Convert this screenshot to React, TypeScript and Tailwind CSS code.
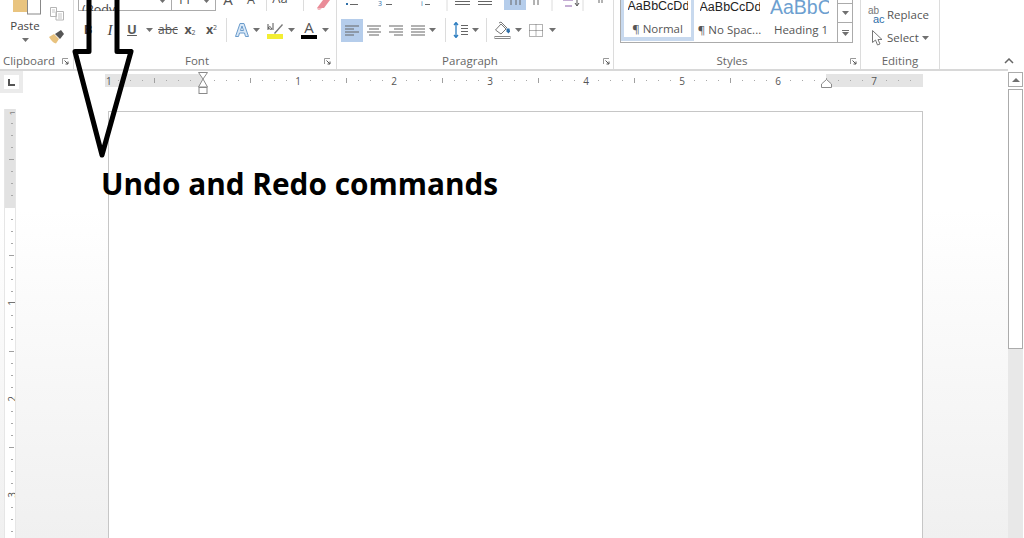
import React from 'react';

const FONT = "font-['Open_Sans','Noto_Sans',sans-serif]";

function Caret({ className = '' }: { className?: string }) {
  return (
    <svg width="7" height="4" viewBox="0 0 7 4" className={className}>
      <path d="M0 0h7L3.5 4z" fill="#707070" />
    </svg>
  );
}

function Launcher() {
  return (
    <svg width="7" height="7" viewBox="0 0 7 7" className="shrink-0">
      <path d="M0.5 6V0.5H6" fill="none" stroke="#999" />
      <path d="M2.5 2.5L6 6M6 3.5V6H3.5" fill="none" stroke="#555" />
    </svg>
  );
}

function Sep({ className = 'h-[24px]' }: { className?: string }) {
  return <div className={`w-px shrink-0 bg-[#dcdcdc] ${className}`} />;
}

function GroupLabel({ label, launcher = true, launcherGap = 'mr-[3px]', labelClass = '' }: { label: string; launcher?: boolean; launcherGap?: string; labelClass?: string }) {
  return (
    <div className="h-[16px] flex items-center">
      <span className={`flex-1 text-center text-[11.5px] leading-[16px] text-[#666] ${labelClass}`}>{label}</span>
      {launcher && <span className={`flex ${launcherGap}`}><Launcher /></span>}
    </div>
  );
}

function Lines({ kind }: { kind: 'left' | 'center' | 'right' | 'justify' }) {
  const rows: Record<string, number[][]> = {
    left: [[1, 15], [1, 10], [1, 15], [1, 10]],
    center: [[1, 15], [3, 13], [1, 15], [3, 13]],
    right: [[1, 15], [6, 15], [1, 15], [6, 15]],
    justify: [[1, 15], [1, 15], [1, 15], [1, 15]],
  };
  return (
    <svg width="16" height="11" viewBox="0 0 16 11">
      {rows[kind].map(([a, b], i) => (
        <rect key={i} x={a} y={i * 3 + 0.5} width={b - a} height="1" fill="#666" />
      ))}
    </svg>
  );
}

function ClipboardGroup() {
  return (
    <div className="w-[74px] shrink-0 flex flex-col border-r border-[#dcdcdc]">
      <div className="h-[53px] flex">
        <div className="w-[47px] flex flex-col items-center pl-[3px]">
          <svg width="29" height="15" viewBox="0 0 29 15" className="ml-[4px]">
            <rect x="0" y="-2" width="14" height="14" fill="#e9c47f" />
            <rect x="14.5" y="-2" width="13" height="16" fill="#fff" stroke="#888" />
          </svg>
          <span className="text-[11.5px] leading-[14px] mt-[4px] text-[#444]">Paste</span>
          <Caret className="mt-[5px]" />
        </div>
        <div className="flex flex-col pt-[7px] pl-[2px]">
          <svg width="16" height="14" viewBox="0 0 16 14">
            <path d="M1.500 .5h6v9h-6zM7 4.500h7.500v8.500H7z" fill="#fff" stroke="#b5b5b5" />
            <path d="M3 3h3M3 5h3M9 7h4M9 9h4M9 11h4" stroke="#c4c4c4" />
          </svg>
          <svg width="16" height="15" viewBox="0 0 16 15" className="mt-[8px]">
            <path d="M0 8l5-3 5 5-3 4.500C4 14 2 11 0 8z" fill="#e8c27e" />
            <path d="M6 5l5 5 4-5-3-4z" fill="#555" />
          </svg>
        </div>
      </div>
      <GroupLabel label="Clipboard" launcherGap="mr-[4px]" labelClass="pr-[4px]" />
    </div>
  );
}

function FontGroup() {
  return (
    <div className="w-[263px] shrink-0 flex flex-col border-r border-[#dcdcdc]">
      {/* cut off by the top of the window */}
      <div className="h-[11px] flex items-end overflow-hidden pl-[4px]">
        <div className="w-[94px] h-[20px] flex items-center justify-between border border-[#ababab] pl-[3px] pr-[5px] pb-[1px] text-[12.5px] text-[#444]">
          <span>Calibri (Body)</span>
          <Caret />
        </div>
        <div className="w-[44px] h-[20px] flex items-center justify-between border border-l-0 border-[#ababab] pl-[5px] pr-[5px] pb-[1px] text-[12.5px] text-[#444]">
          <span>11</span>
          <Caret />
        </div>
        <div className="w-[24px] h-[20px] text-center text-[15px] leading-[16px] text-[#555]">A</div>
        <div className="w-[22px] h-[20px] text-center text-[12.5px] leading-[17px] text-[#555]">A</div>
        <div className="w-[4px]" />
        <Sep className="h-[11px] self-start" />
        <div className="w-[26px] h-[20px] text-center text-[13px] leading-[15px] text-[#555]">Aa</div>
        <div className="w-[10px]" />
        <Sep className="h-[11px] self-start" />
        <svg width="16" height="11" viewBox="0 0 16 11" className="ml-[10px] self-start">
          <path d="M3 8l6-8h7l-6 8z" fill="#ea8c98" />
          <path d="M3 8h5l-2 2H4z" fill="#f3b9c0" />
        </svg>
      </div>
      <div className="mt-[7px] h-[24px] flex items-center pl-[3px]">
        <span className="w-[22px] text-center font-bold text-[13px] text-[#444]">B</span>
        <span className="w-[22px] text-center italic font-['Liberation_Serif',serif] text-[15px] text-[#444]">I</span>
        <span className="w-[22px] text-center underline font-bold text-[13px] text-[#5a5a5a]">U</span>
        <Caret className="ml-[3px]" />
        <span className="w-[30px] text-center line-through text-[12px] text-[#555]">abc</span>
        <span className="w-[14px] text-center font-bold text-[12.5px] text-[#555]">x<sub className="text-[7px] font-normal">2</sub></span>
        <span className="w-[29px] text-center font-bold text-[12.5px] text-[#555]">x<sup className="text-[7px] font-normal">2</sup></span>
        <Sep className="h-[24px]" />
        <svg width="16" height="16" viewBox="0 0 16 16" className="ml-[7px]">
          <path d="M1.500 14.500L6 1.500h4l4.500 13h-3L10.500 11h-5l-1 3.500z" fill="#d9e8f7" stroke="#6b9ccc" />
          <path d="M6.500 8.500h3L8 4z" fill="#fff" stroke="#6b9ccc" />
        </svg>
        <Caret className="ml-[3px]" />
        <svg width="17" height="17" viewBox="0 0 17 17" className="ml-[7px]">
          <rect x="0" y="12" width="16" height="5" fill="#f3ee33" />
          <path d="M7 11l8-9 1 1-8 9z" fill="#777" />
          <path d="M1 8V2M1 6q2-3 3.500 0t-3.500 0M6 1v7" fill="none" stroke="#555" />
        </svg>
        <Caret className="ml-[4px]" />
        <div className="w-[16px] ml-[6px] flex flex-col items-center">
          <span className="text-[15px] leading-[13px] text-[#555]">A</span>
          <span className="w-[16px] h-[4px] mt-[1px] bg-black" />
        </div>
        <Caret className="ml-[5px]" />
      </div>
      <div className="mt-[11px]"><GroupLabel label="Font" launcherGap="mr-[5px]" labelClass="pr-[4px]" /></div>
    </div>
  );
}

function ParagraphGroup() {
  return (
    <div className="w-[277px] shrink-0 flex flex-col border-r border-[#dcdcdc]">
      <div className="h-[11px] flex items-start overflow-hidden text-[#666]">
        <svg width="276" height="11" viewBox="0 0 276 11">
          <rect x="9" y="3" width="2" height="2" fill="#2f6fa8" />
          <text x="41" y="6" fontSize="7" fill="#2f6fa8">3</text>
          <text x="84" y="6" fontSize="7" fill="#2f6fa8">i</text>
          <path d="M13 4.500h8M49 4.500h6M88 4.500h5" stroke="#666" />
          <rect x="167" y="0" width="22" height="10" fill="#b5cdeb" />
          <path d="M118 1.500h15M118 4.500h15M141 1.500h14M141 4.500h14M174 0v5M179 0v5M183 0v5M197 0v5M201 0v5M262 0v3M265 0v3" stroke="#666" />
          <path d="M226 0L236 0M228 6h7" stroke="#8a5ca8" />
          <path d="M240 0v5M238 3l2 3 2-3" fill="none" stroke="#555" />
          <path d="M110 0v11M215 0v11M246 0v11" stroke="#dcdcdc" />
        </svg>
      </div>
      <div className="mt-[7px] h-[24px] flex items-center pl-[4px]">
        <div className="w-[22px] h-[23px] bg-[#b5cdeb] flex items-center justify-center"><Lines kind="left" /></div>
        <div className="w-[22px] flex justify-center"><Lines kind="center" /></div>
        <div className="w-[22px] flex justify-center"><Lines kind="right" /></div>
        <div className="w-[22px] flex justify-center"><Lines kind="justify" /></div>
        <Caret />
        <div className="w-[9px]" />
        <Sep />
        <svg width="16" height="16" viewBox="0 0 16 16" className="ml-[7px]">
          <path d="M3 1v14M1 3l2-2.500L5 3M1 13l2 2.500L5 13" fill="none" stroke="#2f7fc1" strokeWidth="1.300" />
          <path d="M8 3.500h7M8 6.500h7M8 9.500h7M8 12.500h7" stroke="#666" />
        </svg>
        <Caret className="ml-[3px]" />
        <div className="w-[7px]" />
        <Sep />
        <svg width="17" height="18" viewBox="0 0 17 18" className="ml-[7px]">
          <path d="M1.500 9L7 3l5 5-5 5z" fill="#fff" stroke="#777" />
          <path d="M5 2l2-1 6 6" fill="none" stroke="#777" />
          <path d="M12.500 7.500l3 0 .5 3-1.500 2-2-2z" fill="#2f6fa8" />
          <rect x="1" y="15.500" width="15" height="2" fill="#fff" stroke="#888" />
        </svg>
        <Caret className="ml-[4px]" />
        <svg width="14" height="13" viewBox="0 0 14 13" className="ml-[7px]">
          <rect x=".5" y=".5" width="13" height="12" fill="none" stroke="#666" strokeDasharray="1 1" />
          <path d="M.5 6.500h13M7 .5v12" stroke="#666" strokeDasharray="1 1" />
        </svg>
        <Caret className="ml-[6px]" />
      </div>
      <div className="mt-[11px]"><GroupLabel label="Paragraph" /></div>
    </div>
  );
}

function StylesGroup() {
  return (
    <div className="w-[247px] shrink-0 flex flex-col border-r border-[#dcdcdc]">
      <div className="h-[43px] pl-[6px]">
        <div className="w-[233px] h-[43px] flex border-b border-l border-r border-[#ababab] overflow-hidden">
          <div className="w-[73px] shrink-0 -mt-px h-[42px] border-b-[4px] border-x-[3px] border-[#c8d9ee] flex flex-col items-center overflow-hidden">
            <span className="h-[21px] text-[12.5px] leading-[14px] w-[60px] overflow-hidden whitespace-nowrap text-[#222] font-['Liberation_Sans',sans-serif]">AaBbCcDd</span>
            <span className="text-[11.5px] leading-[16px] text-[#555] mt-[1px]">¶ Normal</span>
          </div>
          <div className="w-[71px] shrink-0 flex flex-col items-center">
            <span className="h-[21px] text-[12.5px] leading-[14px] w-[60px] overflow-hidden whitespace-nowrap text-[#222] font-['Liberation_Sans',sans-serif]">AaBbCcDd</span>
            <span className="text-[11.5px] leading-[16px] text-[#555] mt-[1px] whitespace-nowrap">¶ No Spac...</span>
          </div>
          <div className="w-[72px] shrink-0 flex flex-col items-center">
            <span className="h-[21px] text-[19.5px] leading-[14px] w-[59px] overflow-hidden whitespace-nowrap text-[#6d9fd0] font-['Liberation_Sans',sans-serif] -ml-[3px]">AaBbCc</span>
            <span className="text-[11.5px] leading-[16px] text-[#555] mt-[1px] whitespace-nowrap">Heading 1</span>
          </div>
          <div className="flex-1 flex flex-col border-l border-[#ababab]">
            <div className="h-[4px] border-b border-[#ababab]" />
            <div className="h-[19px] flex items-center justify-center border-b border-[#ababab]"><Caret /></div>
            <div className="flex-1 flex flex-col items-center justify-center">
              <span className="w-[7px] h-px bg-[#707070] mb-px" />
              <Caret />
            </div>
          </div>
        </div>
      </div>
      <div className="mt-[10px]"><GroupLabel label="Styles" /></div>
    </div>
  );
}

function EditingGroup() {
  return (
    <div className="w-[79px] shrink-0 flex flex-col border-r border-[#dcdcdc]">
      <div className="h-[53px] flex flex-col pl-[6px] pt-[7px]">
        <div className="h-[16px] flex items-center">
          <span className="w-[20px] flex flex-col text-[10px] leading-[8px] font-['Liberation_Sans',sans-serif]">
            <span className="text-[#777] pl-[1px]">ab</span>
            <span className="text-[#2f6fa8] pl-[6px] text-[11px] leading-[9px]">ac</span>
          </span>
          <span className="text-[11.5px] leading-[16px] text-[#555]">Replace</span>
        </div>
        <div className="h-[17px] mt-[6px] flex items-center pl-[5px]">
          <svg width="11" height="16" viewBox="0 0 11 16" className="shrink-0">
            <path d="M.5 .5v12l3-2.500 2 5 2.500-1-2-4.500h4z" fill="#fff" stroke="#777" />
          </svg>
          <span className="text-[11.5px] leading-[16px] text-[#555] ml-[4px]">Select</span>
          <Caret className="ml-[3px]" />
        </div>
      </div>
      <GroupLabel label="Editing" launcher={false} />
    </div>
  );
}

function tickOf(offset: number) {
  if (offset !== 0 && offset % 8 === 0) return { label: String(Math.abs(offset / 8)), long: false };
  return { label: '', long: offset % 4 === 0 && offset !== 0 };
}

function TopRuler() {
  const cells = Array.from({ length: 67 }, (_, i) => i - 7);
  return (
    <div className="h-[24px] flex border-t-2 border-[#d8d8d8]">
      <div className="w-[23px] h-[22px] shrink-0 bg-[#ebebeb] flex items-center justify-center pr-px">
        <div className="w-[15px] h-[14px] bg-white flex items-center justify-center">
          <svg width="7" height="7" viewBox="0 0 7 7"><path d="M1 0v6h6" fill="none" stroke="#555" strokeWidth="2" /></svg>
        </div>
      </div>
      <div className="relative ml-[82px] mt-[3px] w-[818px] h-[13px] flex items-center bg-[linear-gradient(to_right,#e4e4e4_97px,#ffffff_97px,#ffffff_721px,#e4e4e4_721px)]">
        <span className="w-[7px] shrink-0 text-[10px] leading-[12px] text-[#555] pl-px">1</span>
        {cells.map((off) => {
          const t = tickOf(off);
          return (
            <div key={off} className="w-[12px] shrink-0 flex justify-center items-center">
              {t.label ? (
                <span className="text-[10px] leading-[12px] text-[#555]">{t.label}</span>
              ) : t.long ? (
                <span className="w-px h-[5px] bg-[#a0a0a0]" />
              ) : off !== 0 ? (
                <span className="w-px h-px bg-[#a8a8a8]" />
              ) : null}
            </div>
          );
        })}
        <svg width="12" height="22" viewBox="0 0 12 22" className="absolute left-[92px] -top-[2px]">
          <path d="M1.500 .5h9L6 7l4.500 8h-9L6 7z" fill="#fff" stroke="#8a8a8a" />
          <rect x="2" y="15.500" width="8" height="6" fill="#fff" stroke="#8a8a8a" />
        </svg>
        <svg width="11" height="9" viewBox="0 0 11 9" className="absolute left-[716px] top-[5px]">
          <path d="M.5 8.500V5L5.500 .5 10.500 5v3.500z" fill="#fff" stroke="#8a8a8a" />
        </svg>
      </div>
    </div>
  );
}

function SideRuler() {
  const cells = Array.from({ length: 36 }, (_, i) => i - 7);
  return (
    <div className="w-[12px] mt-[16px] ml-[4px] shrink-0 flex flex-col bg-[linear-gradient(to_bottom,#e2e2e2_99px,#ffffff_99px)] border-x border-[#e6e6e6] overflow-hidden pl-[3px]">
      <span className="h-[8px] shrink-0 flex items-center justify-center text-[8px] leading-[8px] text-[#555] -rotate-90">1</span>
      {cells.map((off) => {
        const t = tickOf(off);
        return (
          <div key={off} className="h-[12px] shrink-0 flex items-center justify-center">
            {t.label ? (
              <span className="text-[10px] leading-[10px] text-[#555] -rotate-90">{t.label}</span>
            ) : t.long ? (
              <span className="w-[5px] h-px bg-[#a0a0a0]" />
            ) : off !== 0 ? (
              <span className="w-[2px] h-px bg-[#a8a8a8]" />
            ) : null}
          </div>
        );
      })}
    </div>
  );
}

export default function App() {
  return (
    <div className={`relative w-[1024px] h-[538px] overflow-hidden bg-white ${FONT}`}>
      {/* Ribbon */}
      <div className="h-[69px] flex">
        <ClipboardGroup />
        <FontGroup />
        <ParagraphGroup />
        <StylesGroup />
        <EditingGroup />
        <div className="flex-1 flex justify-end items-end pr-[10px] pb-[5px]">
          <svg width="10" height="6" viewBox="0 0 10 6"><path d="M1 5l4-4 4 4" fill="none" stroke="#666" strokeWidth="1.500" /></svg>
        </div>
      </div>

      <div className="flex h-[469px]">
        {/* Document area */}
        <div className="w-[1008px] shrink-0 flex flex-col bg-[linear-gradient(to_bottom,#ffffff_0%,#ffffff_30%,#f0f0f0_100%)]">
          <TopRuler />
          <div className="flex flex-1 min-h-0">
            <SideRuler />
            <div className="ml-[92px] mt-[18px] w-[815px] shrink-0 bg-white border-t border-x border-[#c6c6c6]">
              <h1 className="-ml-[8px] mt-[52px] text-[29.8px] leading-[40px] font-bold text-black whitespace-nowrap">Undo and Redo commands</h1>
            </div>
          </div>
        </div>

        {/* Scrollbar */}
        <div className="w-[15px] shrink-0 mt-[3px] flex flex-col">
          <div className="h-[15px] border border-[#ababab] flex items-center justify-center">
            <svg width="8" height="4" viewBox="0 0 8 4"><path d="M0 4h8L4 0z" fill="#707070" /></svg>
          </div>
          <div className="h-[260px] mt-[2px] border border-[#ababab] bg-white" />
          <div className="flex-1 bg-[#e8e8e8]" />
        </div>
      </div>

      {/* Hand-drawn arrow pasted over the screenshot */}
      <svg width="140" height="160" viewBox="0 0 140 160" className="absolute left-0 top-0 pointer-events-none">
        <path d="M89 0V51.500H75L102 155L131 51.500H117V0" fill="none" stroke="#000" strokeWidth="5" strokeLinejoin="round" />
      </svg>
    </div>
  );
}
